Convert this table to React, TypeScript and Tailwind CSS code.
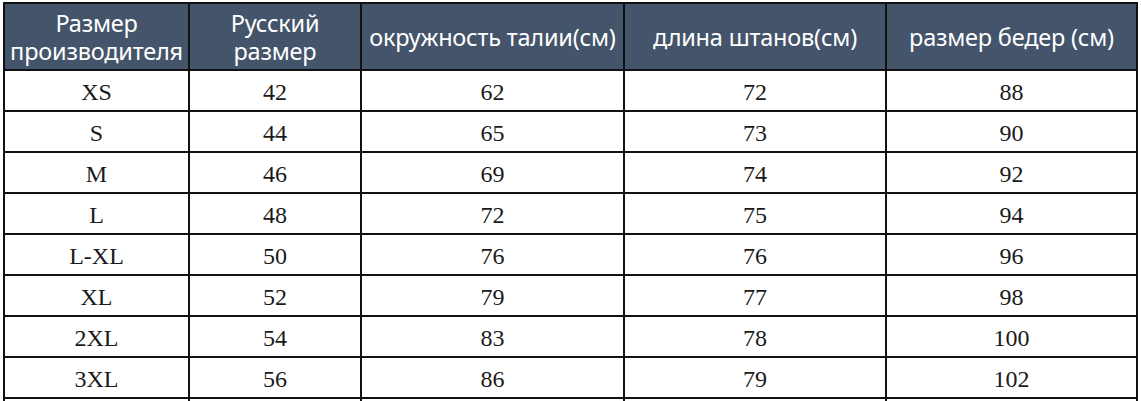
import React from 'react';

const headers = [
  ['Размер', 'производителя'],
  ['Русский', 'размер'],
  ['окружность талии(см)'],
  ['длина штанов(см)'],
  ['размер бедер (см)'],
];

const rows: string[][] = [
  ['XS', '42', '62', '72', '88'],
  ['S', '44', '65', '73', '90'],
  ['M', '46', '69', '74', '92'],
  ['L', '48', '72', '75', '94'],
  ['L-XL', '50', '76', '76', '96'],
  ['XL', '52', '79', '77', '98'],
  ['2XL', '54', '83', '78', '100'],
  ['3XL', '56', '86', '79', '102'],
  ['', '', '', '', ''],
];

const widths = ['w-[185px]', 'w-[172px]', 'w-[263px]', 'w-[262px]', 'w-[251px]'];

const App: React.FC = () => {
  return (
    <div className="w-[1141px] h-[401px] overflow-hidden bg-white pt-[2px] pl-[3px]">
      <table className="table-fixed border-collapse w-[1135px]">
        <colgroup>
          {widths.map((w, i) => <col key={i} className={w} />)}
        </colgroup>
        <thead>
          <tr className="h-[67px] bg-[#44546a]">
            {headers.map((lines, i) => (
              <th
                key={i}
                className="border-2 border-[#111] text-white font-normal text-center text-[23.5px] leading-[28px] px-0 whitespace-nowrap overflow-visible"
                style={{ fontFamily: '"Noto Sans", "Open Sans", sans-serif' }}
              >
                {lines.map((l) => <div key={l} className="tracking-[-0.2px]">{l}</div>)}
              </th>
            ))}
          </tr>
        </thead>
        <tbody>
          {rows.map((row, r) => (
            <tr key={r} className="h-[41px]">
              {row.map((cell, c) => (
                <td
                  key={c}
                  className="border-2 border-[#111] text-center text-[24px] text-[#1a1a1a] leading-none p-0 pt-[3px]"
                  style={{ fontFamily: '"Liberation Serif", serif' }}
                >
                  {cell}
                </td>
              ))}
            </tr>
          ))}
        </tbody>
      </table>
    </div>
  );
};

export default App;
